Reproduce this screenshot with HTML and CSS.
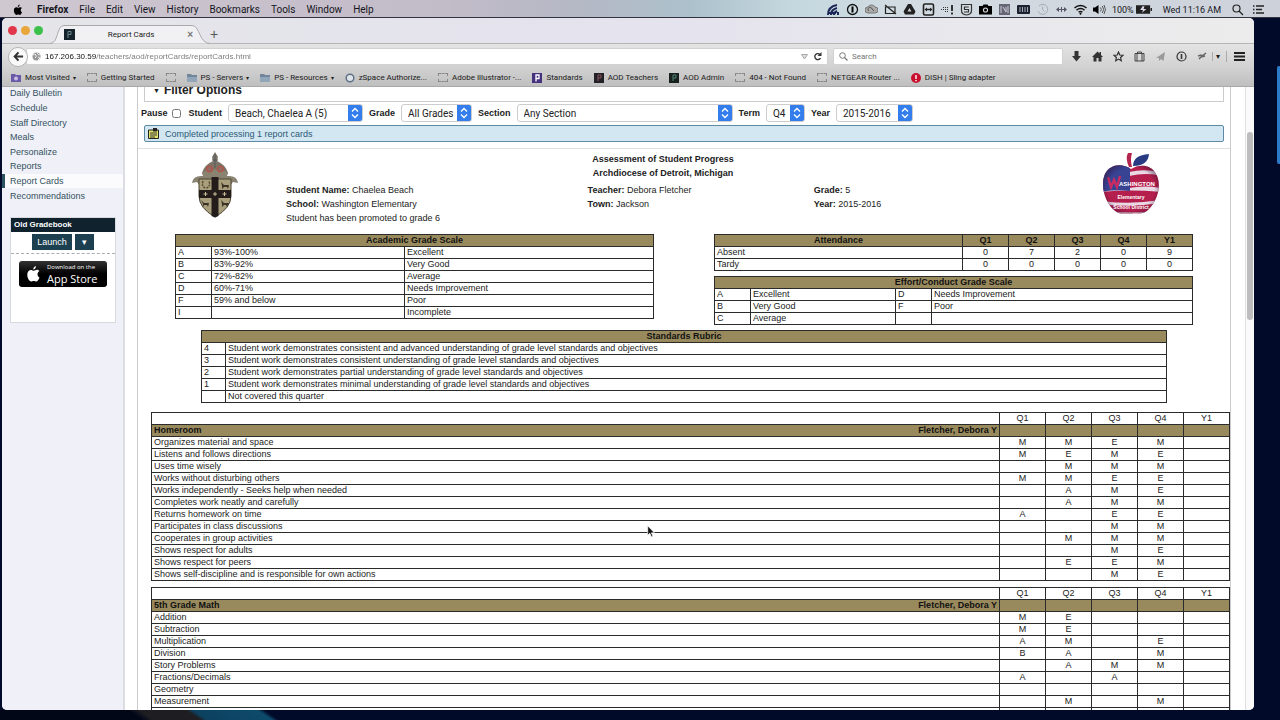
FILE: index.html
```html
<!DOCTYPE html>
<html lang="en">
  <head>
    <meta charset="UTF-8" />
    <meta name="viewport" content="width=device-width, initial-scale=1.0" />
    <title>Report Cards</title>
    <link rel="stylesheet" href="styles.css">
  </head>
  <body>
    <header class="menubar">
      <svg class="apple" viewBox="0 0 12 14"><path d="M8 0.5C8 2 7 3.3 5.800 3.300 5.700 2 6.800 0.800 8 0.500ZM10.800 9.800C10.200 11.500 9.200 13 8.200 13 7.400 13 7.200 12.500 6.200 12.500 5.200 12.500 4.900 13 4.200 13 2.800 13 1 10.300 1 7.600 1 5 2.500 3.700 4 3.700 5 3.700 5.600 4.300 6.300 4.300 7 4.300 7.700 3.600 8.900 3.600 9.700 3.600 10.400 4.100 10.700 4.600 8.600 5.800 8.900 8.900 10.800 9.800Z"/></svg>
      <nav class="menus">
        <b>Firefox</b>
        <span>File</span>
        <span>Edit</span>
        <span>View</span>
        <span>History</span>
        <span>Bookmarks</span>
        <span>Tools</span>
        <span>Window</span>
        <span>Help</span>
      </nav>
      <div class="status">
        <svg viewBox="0 0 13 13"><path d="M1 12C1 7 4 3 10 2M4 12C4 9 6 6 10 5M7 12C7 10 8 9 10 8M2 10H9" fill="none" stroke="#1c2657" stroke-width="2"/><path d="M10 9h2v3h-2z" fill="#1c2657"/></svg>
        <svg viewBox="0 0 13 13"><circle cx="6.500" cy="6.500" r="5" fill="none" stroke="#111" stroke-width="1.300"/><path d="M5.500 3.500h2v6h-2z"/></svg>
        <svg viewBox="0 0 13 13"><path d="M3 10a3 3 0 0 1 0-6 4 4 0 0 1 7 0 3 3 0 0 1 0 6z" fill="#aaa" stroke="#777"/><path d="M4 8a2 2 0 1 1 3-2l2 2" fill="none" stroke="#555"/></svg>
        <svg viewBox="0 0 13 13"><path d="M1.500 4h9.500v6.500H1.500zM1 2l11 9" fill="none" stroke="#222" stroke-width="1.200"/></svg>
        <svg viewBox="0 0 13 13"><path d="M5 1h3l4.500 7.500-1.500 3H2L.5 8.500z" fill="#222"/><path d="M6.500 5l2 3.500h-4z" fill="#ccd1da"/></svg>
        <svg viewBox="0 0 13 13"><rect x="1.500" y="1" width="10" height="11" rx="1.500" fill="none" stroke="#222" stroke-width="1.600"/><path d="M2.500 6.500l2.500-2v1.300h3V4.500l2.500 2-2.500 2V7.200H5v1.300z" fill="#222"/></svg>
        <svg viewBox="0 0 13 13"><path d="M0 6.500h8M2 4.500h6M4 8.500h4" stroke="#333" stroke-dasharray="1 1"/><path d="M10 2h2v6h-2zM10 9.500h2v2h-2z" fill="#333"/></svg>
        <svg viewBox="0 0 13 13"><path d="M1.500 1.500h10v6q0 4-5 4.500-5-.5-5-4.500z" fill="none" stroke="#333" stroke-width="1.200"/><path d="M8.800 4H4.500v2.500h4V9H4" fill="none" stroke="#333" stroke-width="1.200"/></svg>
        <svg viewBox="0 0 13 13"><path d="M0 3h3.500l1-1.500h4l1 1.500H13v8.500H0z"/><circle cx="6.500" cy="7" r="2.600" fill="#d5d8df"/><circle cx="6.500" cy="7" r="1.500"/></svg>
        <svg viewBox="0 0 13 13"><path d="M1 1h11v11H1z" fill="#667"/><path d="M3 3v7M5 4l3 5V4M10 3v7" fill="none" stroke="#c9ccd5"/></svg>
        <svg viewBox="0 0 13 13"><rect y="2" width="13" height="9" rx="1" fill="#1a2230"/><path d="M3 4v5M5.500 4v5M8 4v5M10.500 4v5" stroke="#aab"/></svg>
        <svg viewBox="0 0 13 13"><path d="M3 3a5 5 0 1 1-1 5M6.500 3.500v3l2 2" fill="none" stroke="#a9acb6"/></svg>
        <svg viewBox="0 0 13 13"><path d="M1 6.500l3-2.500v5zM12 6.500l-3-2.500v5z" fill="#556"/><path d="M4 6.500h5M6.500 4v5" stroke="#556"/></svg>
        <svg viewBox="0 0 13 13"><path d="M.5 5a8.500 8.500 0 0 1 12 0M2.500 7.200a5.700 5.700 0 0 1 8 0M4.600 9.300a2.800 2.800 0 0 1 3.800 0" fill="none" stroke="#111" stroke-width="1.400"/><circle cx="6.500" cy="10.800" r="1"/></svg>
        <svg viewBox="0 0 13 13"><path d="M0 4.500h2L5.500 2v9L2 8.500H0z"/><path d="M7.500 4.500q1.500 2 0 4M9.300 3q2.700 3.500 0 7M11 2q3 4.500 0 9" fill="none" stroke="#555"/></svg>
        <span class="battery">100%</span>
        <svg class="cell" viewBox="0 0 17 9"><path d="M0 0h15v9H0zM15.500 3h1.500v3h-1.500z" fill="#222"/><path d="M7 1L4.500 5h3L6.500 8 11 4H8l1-3z" fill="#dde"/></svg>
        <span class="clock">Wed 11:16 AM</span>
        <svg class="spotlight" viewBox="0 0 13 13"><circle cx="5.500" cy="5.500" r="3.500" fill="none" stroke="#222" stroke-width="1.200"/><path d="M8 8l4 4" stroke="#222" stroke-width="1.300"/></svg>
        <svg viewBox="0 0 13 13"><path d="M1 3h1.500M1 6.500h1.500M1 10h1.500M4 3h8M4 6.500h6M4 10h8" stroke="#222" stroke-width="1.500"/></svg>
      </div>
    </header>

    <div class="window">
      <div class="tabstrip">
        <div class="lights"><i class="red"></i><i class="yellow"></i><i class="green"></i></div>
        <div class="tab">
          <svg class="tab-shape" viewBox="0 0 160 19" preserveAspectRatio="none"><path d="M0 18.500C9 18.500 6 .5 14 .5H142C150 .5 149 18.500 160 18.500" fill="#f1f1f3" stroke="#a9a9ab"/></svg>
          <svg class="favicon" viewBox="0 0 11 11"><path d="M0 0h11v11H0z" fill="#15242a"/><path d="M4 9V2.500h3v3H4" fill="none" stroke="#6d8790"/></svg>
          <span class="tab-title">Report Cards</span>
          <button class="close" aria-label="Close tab">×</button>
        </div>
        <button class="new-tab" aria-label="New tab">+</button>
      </div>

      <div class="navbar">
        <button class="back" aria-label="Back"><svg viewBox="0 0 12 12"><path d="M6 1.500L1.800 6 6 10.500M2 6h9" fill="none" stroke="#333" stroke-width="2.200"/></svg></button>
        <div class="url">
          <svg viewBox="0 0 9 9"><circle cx="4.500" cy="4.500" r="4" fill="#999"/><path d="M1 3q2-2 3 0t-1 3M5 1q1 2 3 2M6 5l2 1-2 2" fill="none" stroke="#eee"/></svg>
          <input type="text" class="url-input" aria-label="Address" value="167.206.30.59/teachers/aod/reportCards/reportCards.html">
          <svg viewBox="0 0 9 9"><path d="M1.500 2.500h6l-3 4.500z" fill="#ddd" stroke="#aaa"/></svg>
          <button class="plain" aria-label="Reload"><svg viewBox="0 0 9 9"><path d="M7 2.500A3 3 0 1 0 7.500 6" fill="none" stroke="#333" stroke-width="1.400"/><path d="M8.500 0v4h-4z" fill="#333"/></svg></button>
        </div>
        <div class="search">
          <svg viewBox="0 0 9 9"><circle cx="3.500" cy="3.500" r="2.800" fill="none" stroke="#777"/><path d="M5.500 5.500l3 3" stroke="#777" stroke-width="1.300"/></svg>
          <input type="text" aria-label="Search" placeholder="Search">
        </div>
        <div class="tools">
          <button class="plain" aria-label="Downloads"><svg viewBox="0 0 11 11"><path d="M3.500 0h4v5H10l-4.500 5.500L1 5h2.500z"/></svg></button>
          <button class="plain" aria-label="Home"><svg viewBox="0 0 11 11"><path d="M5.500.5L0 6h1.500v4.500h3V7h2v3.500h3V6H11L9 4V1H7.500v1.500z"/></svg></button>
          <button class="plain" aria-label="Bookmark"><svg viewBox="0 0 11 11"><path d="M5.500 1l1.300 3 3.200.3-2.400 2.200.7 3.300-2.800-1.700-2.800 1.700.7-3.300L1 4.300 4.200 4z" fill="none" stroke="#333" stroke-width="1.200"/></svg></button>
          <button class="plain" aria-label="Library"><svg viewBox="0 0 11 11"><path d="M1 2.500h9V10H1zM3.500 2.500V1h4v1.500M3 3v7M8 3v7" fill="none" stroke="#444"/></svg></button>
          <button class="plain" aria-label="Send"><svg viewBox="0 0 11 11"><path d="M10 1L1 7h3v3l2-2 2.500 2z" fill="#999"/></svg></button>
          <button class="plain" aria-label="Passwords"><svg viewBox="0 0 11 11"><circle cx="5.500" cy="5.500" r="4.500" fill="none" stroke="#333" stroke-width="1.200"/><path d="M4.700 3h1.600v5H4.700z"/></svg></button>
          <button class="plain" aria-label="Debugger"><svg viewBox="0 0 11 11"><path d="M1 5l3-1 1 1 4-3M2 8l2-2 4-1" fill="none" stroke="#666" stroke-width="1.500"/></svg></button>
          <button class="plain drop" aria-label="More">▾</button>
          <button class="plain burger" aria-label="Menu"><svg viewBox="0 0 11 11"><path d="M0 2h11M0 5.500h11M0 9h11" stroke="#222" stroke-width="1.800"/></svg></button>
        </div>
      </div>

      <nav class="bookmarks">
        <a href="#"><svg viewBox="0 0 10 10"><path d="M0 1h4l1 1h5v7H0z" fill="#6c5aa8"/><circle cx="5" cy="5.500" r="2" fill="#c6bce6"/></svg>Most Visited <small>▾</small></a>
        <a href="#"><i class="blank"></i>Getting Started</a>
        <a href="#" aria-label="Untitled"><i class="blank"></i></a>
        <a href="#"><svg viewBox="0 0 10 10"><path d="M0 1h4l1 1h5v7H0z" fill="#71869a"/><path d="M0 4h10v5H0z" fill="#91a6b8"/></svg>PS - Servers <small>▾</small></a>
        <a href="#"><svg viewBox="0 0 10 10"><path d="M0 1h4l1 1h5v7H0z" fill="#71869a"/><path d="M0 4h10v5H0z" fill="#91a6b8"/></svg>PS - Resources <small>▾</small></a>
        <a href="#"><svg viewBox="0 0 10 10"><circle cx="5" cy="5" r="3.800" fill="#dfe4ea" stroke="#5e7186" stroke-width="1.500"/></svg>zSpace Authorize...</a>
        <a href="#"><i class="blank"></i>Adobe Illustrator -...</a>
        <a href="#"><svg viewBox="0 0 10 10"><path d="M0 0h10v10H0z" fill="#46317e"/><path d="M4 8.500V2h3v3.500H4" fill="none" stroke="#fff" stroke-width="1.300"/></svg>Standards</a>
        <a href="#"><svg viewBox="0 0 10 10"><path d="M0 0h10v10H0z" fill="#222126"/><path d="M4 8V2h3v3H4" fill="none" stroke="#8e5560"/></svg>AOD Teachers</a>
        <a href="#"><svg viewBox="0 0 10 10"><path d="M0 0h10v10H0z" fill="#17211f"/><path d="M4 8V2h3v3H4" fill="none" stroke="#4f8371"/></svg>AOD Admin</a>
        <a href="#"><i class="blank"></i>404 - Not Found</a>
        <a href="#"><i class="blank"></i>NETGEAR Router ...</a>
        <a href="#"><svg viewBox="0 0 10 10"><circle cx="5" cy="5" r="5" fill="#c8102e"/><path d="M4.300 2h1.400v4H4.300zM4.300 7h1.400v1.200H4.300z" fill="#fff"/></svg>DISH | Sling adapter</a>
      </nav>

      <div class="page">
        <aside class="sidebar">
          <ul class="links">
            <li><a href="#">Daily Bulletin</a></li>
            <li><a href="#">Schedule</a></li>
            <li><a href="#">Staff Directory</a></li>
            <li><a href="#">Meals</a></li>
            <li><a href="#">Personalize</a></li>
            <li><a href="#">Reports</a></li>
            <li class="active"><a href="#">Report Cards</a></li>
            <li><a href="#">Recommendations</a></li>
          </ul>
          <div class="gradebook">
            <h3>Old Gradebook</h3>
            <div class="launch">
              <button>Launch</button>
              <button class="more" aria-label="Launch options">▾</button>
            </div>
            <a class="store" href="#">
              <svg viewBox="0 0 12 14"><path fill="#fff" d="M8 0.500C8 2 7 3.300 5.800 3.300 5.700 2 6.800 0.800 8 0.500ZM10.800 9.800C10.200 11.500 9.200 13 8.200 13 7.400 13 7.200 12.500 6.200 12.500 5.200 12.500 4.900 13 4.200 13 2.800 13 1 10.300 1 7.600 1 5 2.500 3.700 4 3.700 5 3.700 5.600 4.300 6.300 4.300 7 4.300 7.700 3.600 8.900 3.600 9.700 3.600 10.400 4.100 10.700 4.600 8.600 5.800 8.900 8.900 10.800 9.800Z"/></svg>
              <span><small>Download on the</small>App Store</span>
            </a>
          </div>
        </aside>

        <main class="content">
          <div class="filter-head"><h2><small>▼</small>Filter Options</h2></div>
          <form class="filters">
            <label class="pause">Pause <input type="checkbox"></label>
            <label for="student">Student</label>
            <select id="student" class="w-student"><option>Beach, Chaelea A (5)</option></select>
            <label for="grade">Grade</label>
            <select id="grade" class="w-grade"><option>All Grades</option></select>
            <label for="section">Section</label>
            <select id="section" class="w-section"><option>Any Section</option></select>
            <label for="term">Term</label>
            <select id="term" class="w-term"><option>Q4</option></select>
            <label for="year">Year</label>
            <select id="year" class="w-year"><option>2015-2016</option></select>
          </form>
          <div class="feedback">
            <svg viewBox="0 0 11 11"><path d="M.5 2h10v8.500H.5z" fill="#e3e66a" stroke="#222"/><path d="M2 5h7M2 7h7M2 9h5" stroke="#333"/><path d="M5 0h4v3.500H5z" fill="#222"/></svg>
            Completed processing 1 report cards
          </div>

          <section class="report">
            <div class="report-head">
              <svg class="crest" viewBox="0 0 48 66">
                <path d="M24 0l3 5-1 4q9 4 11 12l-2 4H13l-2-4q2-8 11-12l-1-4z" fill="#7c7567"/>
                <path d="M11 20q13-5 26 0l-1 4q10-1 11 7l-5-1-3 4H9l-3-4-5 1q1-8 11-7z" fill="#8a8371"/>
                <path d="M8 27h32v17q0 12-16 21Q8 56 8 44z" fill="#a99f7c" stroke="#4b4434"/>
                <path d="M20.500 25h7v39l-3.500 1.500-3.500-1.500zM8 38h32v8H8z" fill="#241c1b"/>
                <path d="M24 2v14M21 8h6" stroke="#55585a"/>
                <circle cx="18.500" cy="17" r="3" fill="#8f6b62" stroke="#c3483f"/><circle cx="29.500" cy="17" r="3" fill="#8f6b62" stroke="#c3483f"/>
                <path d="M12 29q-2 6 3 7 5-1 3-7" fill="none" stroke="#554c30" stroke-width="1.500" stroke-dasharray="2 1"/>
                <path d="M30 30l3 3h5l-1 4-1-2h-3l-2 2v-3zM10 48l3 3h5l-1 4-1-2h-3l-1 2v-3zM30 48l3 3h5l-2 4-1-2h-2l-2 2v-3z" fill="#3b3426"/>
                <path d="M14.500 40v4M12.500 42h4M24 40v4M22 42h4M33.500 40v4M31.500 42h4" stroke="#c9bd98"/>
              </svg>
              <div class="info">
                <div class="title">Assessment of Student Progress<br>Archdiocese of Detroit, Michigan</div>
                <div><b>Student Name:</b> Chaelea Beach<br><b>School:</b> Washington Elementary<br>Student has been promoted to grade 6</div>
                <div><b>Teacher:</b> Debora Fletcher<br><b>Town:</b> Jackson</div>
                <div><b>Grade:</b> 5<br><b>Year:</b> 2015-2016</div>
              </div>
              <svg class="school" viewBox="0 0 60 66">
                <defs>
                  <clipPath id="fruit"><path d="M30 17C21 11 9 12 4 22-1 34 4 50 13 58 19 64 25 60 30 62 35 60 42 64 48 57 57 48 61 32 55 22 50 12 38 12 30 17Z"/></clipPath>
                  <radialGradient id="shade"><stop offset=".75" stop-color="#301030" stop-opacity="0"/><stop offset="1" stop-color="#301030" stop-opacity=".5"/></radialGradient>
                </defs>
                <g clip-path="url(#fruit)">
                  <path d="M0 10h60v56H0z" fill="#b51f4d"/>
                  <path d="M28 20q18-4 32 1v3q-14-4-32 0zM28 36q15-3 32 0v4q-30-3-60 0v-2zM0 49q30 4 60-1v3q-30 5-60 1zM6 59q24 3 48 0v2q-24 3-48 1z" fill="#e8d9e4"/>
                  <path d="M0 10h29v29q-14-2-29 1z" fill="#384394"/>
                  <path d="M7 25l3 10 3-7 3 7 3-11" fill="none" stroke="#c92b63" stroke-width="2.500"/>
                  <ellipse cx="30" cy="37" rx="31" ry="28" fill="url(#shade)"/>
                </g>
                <path d="M28 15q-4-9-1-14h4q-2 6 0 14z" fill="#b3254d"/>
                <path d="M32 14q0-11 16-12-1 12-16 12z" fill="#273a82"/>
                <text x="18" y="34" class="apple-name">ASHINGTON</text>
                <text x="30" y="47" class="apple-sub">Elementary</text>
                <text x="30" y="57" class="apple-sub">School District</text>
              </svg>
            </div>

            <div class="scales">
              <table class="grid">
                <colgroup><col class="c-key"><col class="c-range"><col></colgroup>
                <tr><th colspan="3">Academic Grade Scale</th></tr>
                <tr><td>A</td><td>93%-100%</td><td>Excellent</td></tr>
                <tr><td>B</td><td>83%-92%</td><td>Very Good</td></tr>
                <tr><td>C</td><td>72%-82%</td><td>Average</td></tr>
                <tr><td>D</td><td>60%-71%</td><td>Needs Improvement</td></tr>
                <tr><td>F</td><td>59% and below</td><td>Poor</td></tr>
                <tr><td>I</td><td></td><td>Incomplete</td></tr>
              </table>
              <div class="stack">
                <table class="grid marks">
                  <colgroup><col><col class="c-q"><col class="c-q"><col class="c-q"><col class="c-q"><col class="c-q"></colgroup>
                  <tr><th>Attendance</th><th>Q1</th><th>Q2</th><th>Q3</th><th>Q4</th><th>Y1</th></tr>
                  <tr><td>Absent</td><td>0</td><td>7</td><td>2</td><td>0</td><td>9</td></tr>
                  <tr><td>Tardy</td><td>0</td><td>0</td><td>0</td><td>0</td><td>0</td></tr>
                </table>
                <table class="grid">
                  <colgroup><col class="c-key"><col class="c-effort"><col class="c-key"><col></colgroup>
                  <tr><th colspan="4">Effort/Conduct Grade Scale</th></tr>
                  <tr><td>A</td><td>Excellent</td><td>D</td><td>Needs Improvement</td></tr>
                  <tr><td>B</td><td>Very Good</td><td>F</td><td>Poor</td></tr>
                  <tr><td>C</td><td>Average</td><td></td><td></td></tr>
                </table>
              </div>
            </div>

            <div class="rubric">
              <table class="grid">
                <colgroup><col class="c-level"><col></colgroup>
                <tr><th colspan="2">Standards Rubric</th></tr>
                <tr><td>4</td><td>Student work demonstrates consistent and advanced understanding of grade level standards and objectives</td></tr>
                <tr><td>3</td><td>Student work demonstrates consistent understanding of grade level standards and objectives</td></tr>
                <tr><td>2</td><td>Student work demonstrates partial understanding of grade level standards and objectives</td></tr>
                <tr><td>1</td><td>Student work demonstrates minimal understanding of grade level standards and objectives</td></tr>
                <tr><td></td><td>Not covered this quarter</td></tr>
              </table>
            </div>

            <div class="subjects">
              <table class="grid marks">
                <colgroup><col><col class="c-q"><col class="c-q"><col class="c-q"><col class="c-q"><col class="c-q"></colgroup>
                <tr><td></td><td>Q1</td><td>Q2</td><td>Q3</td><td>Q4</td><td>Y1</td></tr>
                <tr class="subject"><th><span>Homeroom</span><span>Fletcher, Debora Y</span></th><th></th><th></th><th></th><th></th><th></th></tr>
                <tr><td>Organizes material and space</td><td>M</td><td>M</td><td>E</td><td>M</td><td></td></tr>
                <tr><td>Listens and follows directions</td><td>M</td><td>E</td><td>M</td><td>E</td><td></td></tr>
                <tr><td>Uses time wisely</td><td></td><td>M</td><td>M</td><td>M</td><td></td></tr>
                <tr><td>Works without disturbing others</td><td>M</td><td>M</td><td>E</td><td>E</td><td></td></tr>
                <tr><td>Works independently - Seeks help when needed</td><td></td><td>A</td><td>M</td><td>E</td><td></td></tr>
                <tr><td>Completes work neatly and carefully</td><td></td><td>A</td><td>M</td><td>M</td><td></td></tr>
                <tr><td>Returns homework on time</td><td>A</td><td></td><td>E</td><td>E</td><td></td></tr>
                <tr><td>Participates in class discussions</td><td></td><td></td><td>M</td><td>M</td><td></td></tr>
                <tr><td>Cooperates in group activities</td><td></td><td>M</td><td>M</td><td>M</td><td></td></tr>
                <tr><td>Shows respect for adults</td><td></td><td></td><td>M</td><td>E</td><td></td></tr>
                <tr><td>Shows respect for peers</td><td></td><td>E</td><td>E</td><td>M</td><td></td></tr>
                <tr><td>Shows self-discipline and is responsible for own actions</td><td></td><td></td><td>M</td><td>E</td><td></td></tr>
              </table>
              <table class="grid marks">
                <colgroup><col><col class="c-q"><col class="c-q"><col class="c-q"><col class="c-q"><col class="c-q"></colgroup>
                <tr><td></td><td>Q1</td><td>Q2</td><td>Q3</td><td>Q4</td><td>Y1</td></tr>
                <tr class="subject"><th><span>5th Grade Math</span><span>Fletcher, Debora Y</span></th><th></th><th></th><th></th><th></th><th></th></tr>
                <tr><td>Addition</td><td>M</td><td>E</td><td></td><td></td><td></td></tr>
                <tr><td>Subtraction</td><td>M</td><td>E</td><td></td><td></td><td></td></tr>
                <tr><td>Multiplication</td><td>A</td><td>M</td><td></td><td>E</td><td></td></tr>
                <tr><td>Division</td><td>B</td><td>A</td><td></td><td>M</td><td></td></tr>
                <tr><td>Story Problems</td><td></td><td>A</td><td>M</td><td>M</td><td></td></tr>
                <tr><td>Fractions/Decimals</td><td>A</td><td></td><td>A</td><td></td><td></td></tr>
                <tr><td>Geometry</td><td></td><td></td><td></td><td></td><td></td></tr>
                <tr><td>Measurement</td><td></td><td>M</td><td></td><td>M</td><td></td></tr>
                <tr><td></td><td></td><td></td><td></td><td></td><td></td></tr>
              </table>
            </div>
          </section>
        </main>
        <div class="scrollbar"><div class="thumb"></div></div>
      </div>
    </div>

    <div class="other-window"></div>
    <svg class="pointer" viewBox="0 0 8 13"><path d="M.7.8v9.500l2.200-2 1.500 3.700 1.500-.7-1.500-3.500h3z" fill="#111" stroke="#fff" stroke-width=".7"/></svg>
  </body>
</html>
```
FILE: styles.css
```css
* {
  box-sizing: border-box;
}
html,
body {
  margin: 0;
  height: 100vh;
  overflow: hidden;
}
body {
  display: flex;
  flex-direction: column;
  font-family: "Liberation Sans", Arial, sans-serif;
  font-size: 9px;
  color: #222;
  background: linear-gradient(34deg, #020718 80px, #1d1d22 86px, #1d1d22 112px, #0d4160 116px, #0d4a6b 152px, #020a2a 156px) left bottom / 300px 10px no-repeat, #020a2a;
}
button,
input,
select {
  font: inherit;
  color: inherit;
  margin: 0;
}
svg {
  display: block;
  flex: none;
}

/* system menu bar */
.menubar {
  display: flex;
  align-items: center;
  flex: none;
  height: 18px;
  padding: 2px 15px 0 13px;
  border-bottom: 1px solid #33333f;
  background: linear-gradient(90deg, #cfc8d1, #c2bbc8 35%, #b5b8c5 45%, #acc1cc 54%, #c5d8df 62%, #d3dce2 72%, #cdd1da);
  font-family: Roboto, sans-serif;
  font-size: 10px;
  color: #15151c;
  white-space: nowrap;
}
.apple {
  width: 10px;
  height: 12px;
}
.menus {
  display: flex;
  gap: 11px;
  margin-left: 14px;
}
.status {
  display: flex;
  align-items: center;
  gap: 6px;
  margin-left: auto;
}
.status svg {
  width: 13px;
  height: 13px;
}
.status .cell {
  width: 16px;
  height: 9px;
  margin-left: -4px;
}
.battery,
.clock {
  font-size: 9px;
}
.clock {
  margin-left: 5px;
}
.status .spotlight {
  margin: 0 2px 0 4px;
}

/* browser window */
.window {
  display: flex;
  flex-direction: column;
  flex: 1;
  min-height: 0;
  margin: 0 26px 10px 2px;
  border-radius: 5px;
  overflow: hidden;
  background: #fff;
}
.tabstrip {
  display: flex;
  align-items: flex-end;
  flex: none;
  height: 26px;
  padding-left: 6px;
  background: linear-gradient(90deg, #e5e5e9, #e4e3ee 50%, #ececec);
  border-bottom: 1px solid #b5b5b6;
}
.lights {
  display: flex;
  gap: 4px;
  padding-bottom: 8px;
}
.lights i {
  width: 9px;
  height: 9px;
  border-radius: 50%;
}
.red {
  background: #e0384a;
}
.yellow {
  background: #e9a63a;
}
.green {
  background: #3bc14a;
}
.tab {
  position: relative;
  display: flex;
  align-items: center;
  width: 160px;
  height: 19px;
  margin: 0 0 -1px 7px;
  padding: 0 17px 0 14px;
}
.tab-shape {
  position: absolute;
  inset: 0;
  width: 100%;
  height: 100%;
}
.favicon {
  position: relative;
  width: 11px;
  height: 11px;
}
.tab-title {
  position: relative;
  flex: 1;
  text-align: center;
  font: 8px Roboto, sans-serif;
}
.close {
  position: relative;
  padding: 0;
  border: 0;
  background: none;
  color: #777;
  font-size: 10px;
  font-weight: bold;
  line-height: 10px;
}
.new-tab {
  padding: 0;
  border: 0;
  background: none;
  color: #555;
  font-size: 14px;
  line-height: 18px;
}
.navbar {
  display: flex;
  align-items: center;
  flex: none;
  height: 25px;
  padding: 0 9px 0 6px;
  background: linear-gradient(#e4e4e4, #d0d0d0);
}
.back {
  z-index: 1;
  display: flex;
  align-items: center;
  justify-content: center;
  width: 20px;
  height: 20px;
  padding: 0;
  border: 1px solid #b3b3b3;
  border-radius: 50%;
  background: #fafafa;
}
.back svg {
  width: 11px;
  height: 11px;
}
.url,
.search {
  display: flex;
  align-items: center;
  gap: 4px;
  height: 17px;
  padding: 0 5px;
  border: 1px solid #d2d2d2;
  border-radius: 2px;
  background: #fff;
}
.url {
  flex: 1;
  margin-left: -2px;
}
.search {
  width: 230px;
  margin-left: 5px;
}
.url svg,
.search svg {
  width: 9px;
  height: 9px;
}
.url input,
.search input {
  flex: 1;
  min-width: 0;
  padding: 0;
  border: 0;
  outline: 0;
  background: none;
  font-family: Roboto, sans-serif;
  font-size: 8px;
}
.url .url-input {
  font-family: "Liberation Sans", Arial, sans-serif;
  color: transparent;
  background: linear-gradient(90deg, #111 51px, #777 51px) text;
  -webkit-background-clip: text;
}
.plain {
  padding: 0;
  border: 0;
  background: none;
}
.tools {
  display: flex;
  align-items: center;
  gap: 10px;
  margin-left: 8px;
}
.tools svg {
  width: 11px;
  height: 11px;
  fill: #333;
}
.tools .drop {
  margin-left: -6px;
  padding-left: 3px;
  border-left: 1px solid #aaa;
  font-size: 8px;
}
.tools .burger {
  margin-left: -4px;
  padding-left: 7px;
  border-left: 1px solid #aaa;
}
.bookmarks {
  display: flex;
  align-items: center;
  flex: none;
  gap: 11px;
  height: 18px;
  padding: 0 9px;
  background: linear-gradient(#d0d0d0, #bfbfbf);
  border-bottom: 1px solid #a9a9a9;
  font: 8px Roboto, sans-serif;
  white-space: nowrap;
}
.bookmarks a {
  display: flex;
  align-items: center;
  gap: 4px;
  color: #1b1b1b;
  text-decoration: none;
}
.bookmarks small {
  margin-left: -1px;
  font-size: 6px;
}
.bookmarks svg {
  width: 10px;
  height: 10px;
}
.blank {
  width: 10px;
  height: 9px;
  border: 1px dashed #888;
}

/* page */
.page {
  display: flex;
  flex: 1;
  min-height: 0;
  overflow: hidden;
}
.sidebar {
  flex: none;
  width: 123px;
  border-right: 2px solid #dcdde3;
  background: #eff0f8;
}
.links {
  display: grid;
  grid-auto-rows: 1fr;
  height: 117px;
  margin: -1px 0 14px;
  padding: 0;
  list-style: none;
}
.links li {
  display: flex;
  align-items: center;
  padding-left: 5px;
  border-left: 3px solid transparent;
}
.links a {
  color: #35525f;
  text-decoration: none;
}
.links .active {
  background: #fbfbfd;
  border-color: #2c5361;
}
.gradebook {
  height: 106px;
  margin: 0 7px 0 8px;
  border: 1px solid #d8d9df;
  background: #fff;
}
.gradebook h3 {
  margin: 0;
  padding-left: 3px;
  background: #10222d;
  color: #fff;
  font-size: 8px;
  line-height: 14px;
}
.launch {
  display: flex;
  justify-content: center;
  gap: 3px;
  padding: 2px 0 3px;
  border-bottom: 1px dashed #a9aeb2;
}
.launch button {
  height: 16px;
  padding: 0 5px;
  border: 0;
  background: #1c4050;
  color: #fff;
}
.launch .more {
  width: 19px;
}
.store {
  display: flex;
  align-items: center;
  gap: 6px;
  height: 26px;
  margin: 7px 8px;
  padding-left: 7px;
  border-radius: 3px;
  background: linear-gradient(#333, #000 50%);
  color: #fff;
  font-family: "Open Sans", sans-serif;
  font-size: 11px;
  line-height: 15px;
  text-decoration: none;
}
.store svg {
  width: 15px;
  height: 18px;
}
.store small {
  display: block;
  font-size: 6px;
  line-height: 8px;
}
.content {
  flex: 1;
  margin: 0 14px 0 12px;
  border: solid #cbcbcb;
  border-width: 0 1px;
}
.filter-head {
  margin: -5px 6px 0;
  padding: 0 0 3px 8px;
  border: 1px solid #ccc;
}
.filter-head h2 {
  display: flex;
  align-items: center;
  gap: 4px;
  margin: 0;
  font-size: 12px;
  line-height: 15px;
}
.filter-head small {
  font-size: 7px;
}
.filters {
  display: flex;
  align-items: center;
  gap: 6px;
  height: 22px;
  padding-left: 3px;
  font-weight: bold;
}
.pause {
  display: flex;
  align-items: center;
  gap: 4px;
  margin-right: 2px;
}
.pause input {
  width: 9px;
  height: 9px;
}
.filters select {
  height: 18px;
  padding: 0 14px 0 6px;
  appearance: none;
  border: 1px solid #cdcdcd;
  border-radius: 3px;
  background: #fff url("data:image/svg+xml,%3Csvg xmlns='http://www.w3.org/2000/svg' width='14' height='16'%3E%3Cpath d='M0 0h14v16H0z' fill='%23337eec'/%3E%3Cpath d='M4 6.500l3-3 3 3M4 9.500l3 3 3-3' fill='none' stroke='%23fff' stroke-width='1.300'/%3E%3C/svg%3E") right center no-repeat;
  font-family: Roboto, sans-serif;
  font-size: 10px;
  font-weight: normal;
}
.w-student {
  width: 135px;
}
.w-grade {
  width: 71px;
}
.w-section {
  width: 216px;
}
.w-term {
  width: 39px;
}
.w-year {
  width: 77px;
}
.feedback {
  display: flex;
  align-items: center;
  gap: 6px;
  height: 17px;
  margin: 1px 6px 6px;
  padding-left: 3px;
  border: 1px solid #5f8aa3;
  border-radius: 2px;
  background: #d3e7f3;
  color: #2c5973;
}
.feedback svg {
  width: 11px;
  height: 11px;
}

/* report */
.report {
  border-top: 1px solid #dfdfdf;
}
.report-head {
  display: grid;
  grid-template-columns: 148px 1fr 190px;
  padding-top: 3px;
  line-height: 14px;
}
.crest {
  width: 48px;
  height: 66px;
  margin-left: 53px;
}
.school {
  width: 60px;
  height: 66px;
  margin-left: 61px;
}
.apple-name {
  fill: #fff;
  font: bold 6px "Liberation Sans", sans-serif;
}
.apple-sub {
  fill: #fff;
  font: bold 5px "Liberation Sans", sans-serif;
  text-anchor: middle;
}
.info {
  display: grid;
  grid-template-columns: 4fr 3fr 3fr;
  row-gap: 3px;
}
.title {
  grid-column: 1 / -1;
  text-align: center;
  font-weight: bold;
}
.scales {
  display: grid;
  grid-template-columns: 1fr 1fr;
  gap: 60px;
  align-items: start;
  margin: 9px 37px 0;
}
.stack {
  display: grid;
  gap: 5px;
}
.grid {
  width: 100%;
  table-layout: fixed;
  border-collapse: collapse;
  line-height: 11px;
}
.grid td,
.grid th {
  height: 12px;
  padding: 0 2px;
  border: 1px solid #2b2b2b;
}
.grid th {
  background: #998a5e;
  color: #111;
}
.marks td + td {
  text-align: center;
}
.subject span:first-child {
  float: left;
}
.subject span:last-child {
  float: right;
}
.c-key {
  width: 36px;
}
.c-range {
  width: 193px;
}
.c-q {
  width: 46px;
}
.c-effort {
  width: 145px;
}
.c-level {
  width: 24px;
}
.rubric {
  margin: 5px 63px 9px;
}
.subjects {
  display: grid;
  gap: 6px;
  margin-left: 13px;
}

.scrollbar {
  flex: none;
  width: 9px;
  padding: 45px 1px 0;
  border-left: 1px solid #e0e0e0;
  background: #fafafa;
}
.thumb {
  width: 6px;
  height: 188px;
  border-radius: 3px;
  background: #bdbdbd;
}

/* things lying over the desktop */
.other-window {
  position: absolute;
  top: 66px;
  right: 0;
  width: 3px;
  height: 98px;
  border-radius: 2px 0 0 2px;
  background: #2c7bc9;
}
.pointer {
  position: absolute;
  top: 525px;
  left: 647px;
  width: 8px;
  height: 13px;
}
```
